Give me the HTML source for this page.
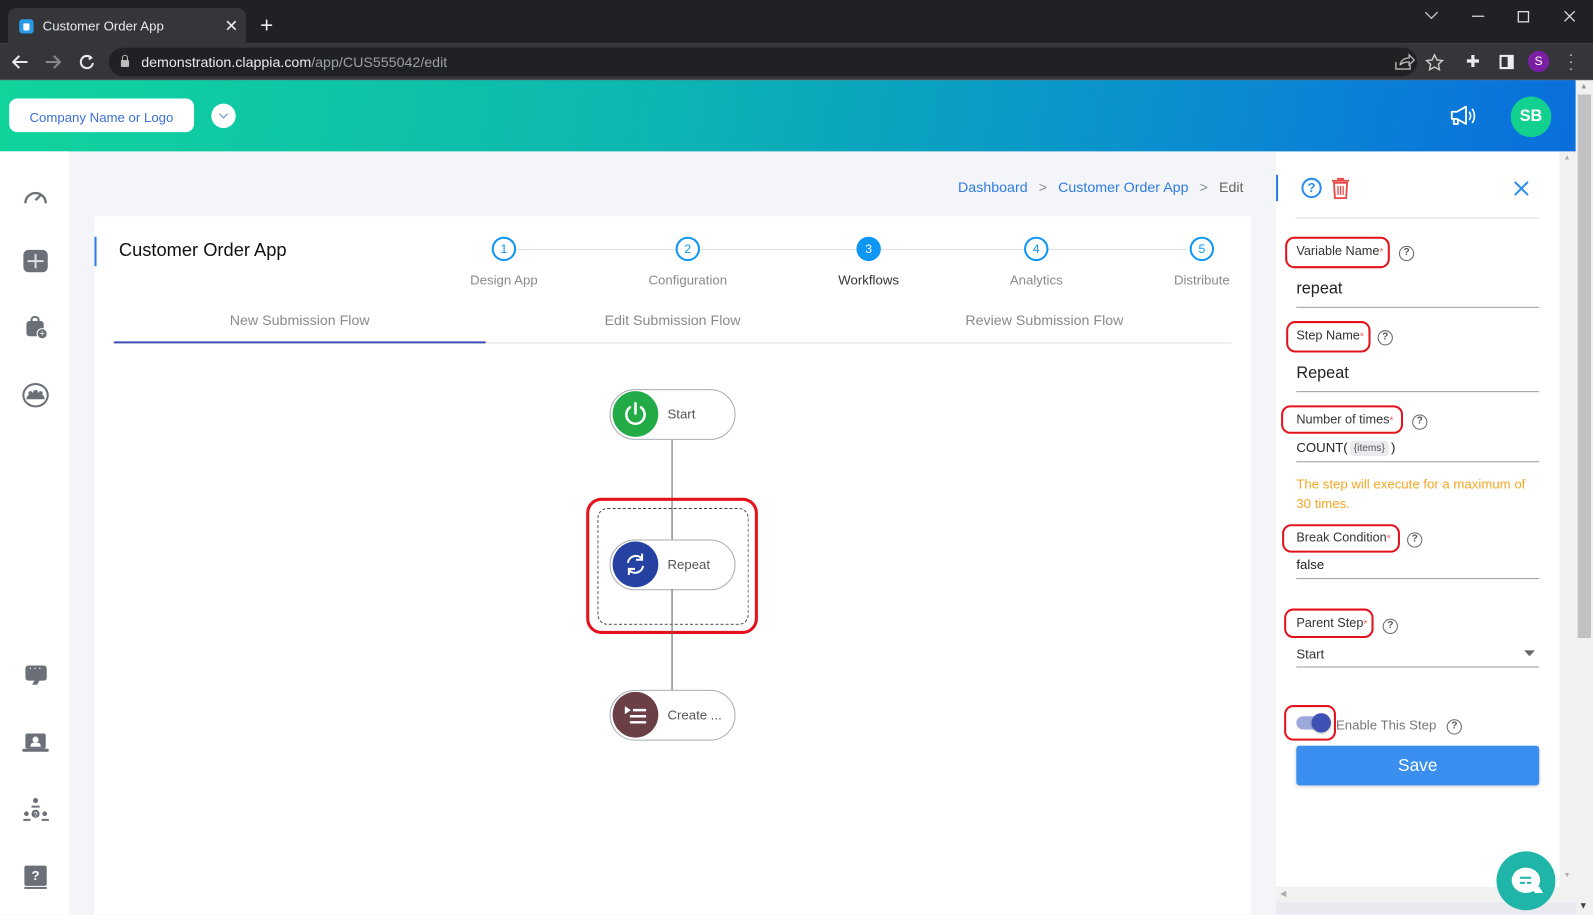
<!DOCTYPE html>
<html><head><meta charset="utf-8">
<style>
*{box-sizing:border-box;margin:0;padding:0}
html,body{width:1593px;height:915px;overflow:hidden;background:#f4f5f9;font-family:"Liberation Sans",Arial,sans-serif}
#w{position:absolute;left:0;top:0;width:1568px;height:900px;transform:scale(1.01594);transform-origin:0 0;background:#f4f5f9}
.a{position:absolute}
.t{position:absolute;white-space:nowrap}
.lbl{font-size:12.5px;color:#333}
.rb{position:absolute;border:2.5px solid #e3121c;border-radius:9px}
.q{position:absolute;width:15px;height:15px;border:1.5px solid #666;border-radius:50%;font-size:10px;color:#555;text-align:center;line-height:12px;font-weight:bold}
.ul{position:absolute;left:1276px;width:239px;height:1px;background:#9e9e9e}
.sc{position:absolute;width:24px;height:24px;border:2px solid #0d96f2;border-radius:50%;color:#0d96f2;font-size:12px;text-align:center;line-height:20px;background:#fff}
.sl{position:absolute;font-size:13px;color:#8a8a8a;white-space:nowrap;transform:translateX(-50%)}
.pill{position:absolute;left:600px;width:124px;height:50px;border:1.5px solid #a9adb2;border-radius:25px;background:#fff}
.pc{position:absolute;left:2px;top:1px;width:45px;height:45px;border-radius:50%}
.pt{position:absolute;left:56px;top:16px;font-size:13px;color:#555}
.si{position:absolute;left:22px}
</style></head><body><div id="w">
<div class="a" style="left:0;top:0;width:1568px;height:43px;background:#202124"></div>
<div class="a" style="left:8px;top:8px;width:234px;height:36px;background:#35363a;border-radius:8px 8px 0 0"></div>
<div class="a" style="left:19px;top:19px;width:14px;height:14px;background:#2b9be8;border-radius:3px"></div>
<div class="a" style="left:23px;top:23px;width:6px;height:7px;background:#fff;border-radius:1px"></div>
<div class="t" style="left:42px;top:18px;font-size:13px;color:#e8eaed">Customer Order App</div>
<div class="t" style="left:221px;top:16px;font-size:16px;color:#e8eaed">✕</div>
<div class="t" style="left:256px;top:12px;font-size:22px;color:#e8eaed">+</div>
<svg class="a" style="left:1400px;top:8px" width="160" height="16"><path d="M3 4l6 6 6-6" stroke="#ccc" fill="none" stroke-width="1.3"/><path d="M49 8h12" stroke="#ddd" stroke-width="1.3"/><rect x="94.5" y="3.5" width="10" height="10" stroke="#ddd" fill="none" stroke-width="1.3"/><path d="M140 3l10 10M150 3l-10 10" stroke="#ddd" stroke-width="1.3"/></svg>
<div class="a" style="left:0;top:43px;width:1568px;height:36px;background:#35363a"></div>
<div class="a" style="left:0;top:78px;width:1568px;height:1px;background:#555"></div>
<svg class="a" style="left:10px;top:51px" width="90" height="20"><path d="M17 10H3m6-6L3 10l6 6" stroke="#e8eaed" stroke-width="2" fill="none"/><path d="M35 10h14m-6-6l6 6-6 6" stroke="#888" stroke-width="2" fill="none"/><path d="M80 6a6 6 0 1 0 1.5 5" stroke="#e8eaed" stroke-width="2" fill="none"/><path d="M77 3l4.5 3-4 2.5z" fill="#e8eaed"/></svg>
<div class="a" style="left:107px;top:47px;width:1288px;height:28px;background:#202124;border-radius:14px"></div>
<div class="a" style="left:119px;top:59px;width:8px;height:7px;background:#bbb;border-radius:1px"></div>
<div class="a" style="left:120px;top:54px;width:6px;height:7px;border:1.5px solid #bbb;border-radius:3px 3px 0 0"></div>
<div class="t" style="left:139px;top:53px;font-size:14px;color:#e8eaed">demonstration.clappia.com<span style="color:#9aa0a6">/app/CUS555042/edit</span></div>
<svg class="a" style="left:1372px;top:52px" width="52" height="18"><path d="M2 9v7h14v-4M6 12c1-5 5-7 9-7V2l5 5-5 5V9c-4 0-7 1-9 3" stroke="#bbb" stroke-width="1.3" fill="none"/><path d="M40 2l2.4 5 5.4.6-4 3.7 1.1 5.4L40 14l-4.9 2.7 1.1-5.4-4-3.7 5.4-.6z" stroke="#ccc" stroke-width="1.4" fill="none"/></svg>
<div class="t" style="left:1443px;top:51px;font-size:16px;color:#e8eaed">✚</div>
<div class="a" style="left:1476px;top:54px;width:14px;height:14px;border:2px solid #eee;border-right-width:6px"></div>
<div class="a" style="left:1504px;top:50px;width:21px;height:21px;border-radius:50%;background:#7b1fa2;color:#fff;font-size:12px;text-align:center;line-height:21px">S</div>
<div class="t" style="left:1544px;top:50px;font-size:14px;color:#ddd;line-height:7px">·<br>·<br>·</div>
<div class="a" style="left:0;top:79px;width:1551px;height:70px;background:linear-gradient(100deg,#10d49c 0%,#0cb7b0 40%,#0a8ed0 75%,#0a6edd 100%)"></div>
<div class="a" style="left:9px;top:97px;width:182px;height:33px;background:#fff;border-radius:8px"></div>
<div class="t" style="left:29px;top:108px;font-size:13px;color:#3b6fd9">Company Name or Logo</div>
<div class="a" style="left:208px;top:102px;width:24px;height:24px;background:#fff;border-radius:50%"></div>
<svg class="a" style="left:215px;top:110px" width="10" height="8"><path d="M1 2l4 4 4-4" stroke="#5b8bd6" fill="none"/></svg>
<svg class="a" style="left:1427px;top:103px" width="28" height="22"><path d="M2 7h5l9-5v17l-9-5H2z M4 14v5h4v-5" stroke="#fff" stroke-width="1.8" fill="none" stroke-linejoin="round"/><path d="M19 7c2 2 2 6 0 8M22 4c3 4 3 10 0 14" stroke="#fff" stroke-width="1.6" fill="none"/></svg>
<div class="a" style="left:1487px;top:95px;width:40px;height:40px;border-radius:50%;background:#12d18e;color:#fff;font-size:16px;font-weight:bold;text-align:center;line-height:40px">SB</div>
<div class="a" style="left:1551px;top:79px;width:17px;height:821px;background:#f1f1f1"></div>
<div class="a" style="left:1553px;top:93px;width:13px;height:535px;background:#c1c1c1"></div>
<div class="t" style="left:1555px;top:80px;font-size:8px;color:#999">▲</div>
<div class="t" style="left:1554px;top:886px;font-size:9px;color:#444">▼</div>
<div class="a" style="left:0;top:149px;width:68px;height:751px;background:#fff"></div>
<svg class="si" style="top:180px" width="26" height="26"><path d="M3 20a10 10 0 1 1 20 0" stroke="#6b6f78" stroke-width="2.3" fill="none"/><path d="M13 17l6-6" stroke="#6b6f78" stroke-width="2.3"/></svg>
<div class="a" style="left:23px;top:246px;width:24px;height:22px;background:#6b6f78;border-radius:5px"></div>
<div class="a" style="left:34px;top:250px;width:2px;height:14px;background:#ddd"></div>
<div class="a" style="left:27px;top:256px;width:16px;height:2px;background:#ddd"></div>
<div class="a" style="left:26px;top:316px;width:17px;height:15px;background:#6b6f78;border-radius:3px"></div>
<div class="a" style="left:30px;top:311px;width:9px;height:7px;border:2px solid #6b6f78;border-radius:4px 4px 0 0"></div>
<div class="a" style="left:36px;top:323px;width:11px;height:11px;background:#6b6f78;border:1.5px solid #fff;border-radius:50%;color:#fff;font-size:9px;line-height:8px;text-align:center">+</div>
<div class="a" style="left:22px;top:377px;width:26px;height:24px;border:2.5px solid #6b6f78;border-radius:50%"></div>
<svg class="a" style="left:26px;top:382px" width="18" height="14"><circle cx="4" cy="5" r="2" fill="#6b6f78"/><circle cx="9" cy="4" r="2.3" fill="#6b6f78"/><circle cx="14" cy="5" r="2" fill="#6b6f78"/><path d="M0 11a4 3 0 0 1 18 0z" fill="#6b6f78"/></svg>
<div class="a" style="left:25px;top:655px;width:21px;height:15px;background:#6b6f78;border-radius:3px"></div>
<div class="a" style="left:33px;top:669px;width:5px;height:5px;background:#6b6f78;transform:skewX(-30deg)"></div>
<div class="t" style="left:28px;top:652px;font-size:11px;color:#fff;letter-spacing:1px">···</div>
<div class="a" style="left:25px;top:722px;width:20px;height:15px;background:#6b6f78;border-radius:2px"></div>
<div class="a" style="left:22px;top:737px;width:26px;height:3px;background:#6b6f78;border-radius:1px"></div>
<div class="a" style="left:32px;top:725px;width:6px;height:6px;background:#fff;border-radius:50%"></div>
<div class="a" style="left:30px;top:731px;width:10px;height:4px;background:#fff;border-radius:3px 3px 0 0"></div>
<svg class="si" style="top:784px" width="28" height="26"><circle cx="13" cy="4" r="2.5" fill="#6b6f78"/><path d="M9 9h8v2H9z" fill="#6b6f78"/><circle cx="4" cy="17" r="2.3" fill="#6b6f78"/><path d="M1 22h7v2H1z" fill="#6b6f78"/><circle cx="22" cy="17" r="2.3" fill="#6b6f78"/><path d="M19 22h7v2h-7z" fill="#6b6f78"/><circle cx="13" cy="17" r="4" fill="#6b6f78"/><text x="13" y="20" font-size="7" fill="#fff" text-anchor="middle" font-family="Liberation Sans">?</text></svg>
<div class="a" style="left:24px;top:852px;width:22px;height:20px;background:#6b6f78;border-radius:2px;color:#fff;font-size:13px;font-weight:bold;text-align:center;line-height:19px">?</div>
<div class="a" style="left:24px;top:873px;width:22px;height:2px;background:#6b6f78"></div>
<div class="t" style="left:943px;top:176px;font-size:14px;color:#2d7be5">Dashboard <span style="color:#888;margin:0 7px">&gt;</span> Customer Order App <span style="color:#888;margin:0 7px">&gt;</span> <span style="color:#666">Edit</span></div>
<div class="a" style="left:93px;top:213px;width:1138px;height:687px;background:#fff"></div>
<div class="a" style="left:93px;top:233px;width:2px;height:29px;background:#2d7be5"></div>
<div class="t" style="left:117px;top:236px;font-size:18px;color:#111">Customer Order App</div>
<div class="a" style="left:508px;top:245px;width:660px;height:1px;background:#dedede"></div>
<div class="sc" style="left:484px;top:233px">1</div>
<div class="sc" style="left:665px;top:233px">2</div>
<div class="sc" style="left:843px;top:233px;background:#0d96f2;color:#fff">3</div>
<div class="sc" style="left:1008px;top:233px">4</div>
<div class="sc" style="left:1171px;top:233px">5</div>
<div class="sl" style="left:496px;top:268px">Design App</div>
<div class="sl" style="left:677px;top:268px">Configuration</div>
<div class="sl" style="left:855px;top:268px;color:#333">Workflows</div>
<div class="sl" style="left:1020px;top:268px">Analytics</div>
<div class="sl" style="left:1183px;top:268px">Distribute</div>
<div class="sl" style="left:295px;top:307px;font-size:14px">New Submission Flow</div>
<div class="sl" style="left:662px;top:307px;font-size:14px">Edit Submission Flow</div>
<div class="sl" style="left:1028px;top:307px;font-size:14px">Review Submission Flow</div>
<div class="a" style="left:112px;top:337px;width:1100px;height:1px;background:#e0e0e0"></div>
<div class="a" style="left:112px;top:336px;width:366px;height:2px;background:#3f51b5"></div>
<div class="a" style="left:661px;top:430px;width:1px;height:250px;background:#666"></div>
<div class="a" style="left:577px;top:490px;width:169px;height:134px;border:3px solid #e3121c;border-radius:15px"></div>
<div class="a" style="left:588px;top:500px;width:149px;height:115px;border:1.5px dashed #444;border-radius:10px"></div>
<div class="a" style="left:661px;top:500px;width:1px;height:32px;background:#666"></div>
<div class="pill" style="top:383px"><div class="pc" style="background:#22ab47"><svg width="45" height="45"><path d="M17 16a9 9 0 1 0 11 0" stroke="#fff" stroke-width="2.5" fill="none" stroke-linecap="round"/><path d="M22.5 12v10" stroke="#fff" stroke-width="2.5" stroke-linecap="round"/></svg></div><div class="pt">Start</div></div>
<div class="pill" style="top:531px"><div class="pc" style="background:#2542a2"><svg width="45" height="45"><path d="M15 21a8 8 0 0 1 14-4M30 24a8 8 0 0 1-14 4" stroke="#fff" stroke-width="2" fill="none"/><path d="M29 12v6h-6M16 33v-6h6" stroke="#fff" stroke-width="2" fill="none"/></svg></div><div class="pt">Repeat</div></div>
<div class="a" style="left:661px;top:580px;width:1px;height:100px;background:#666"></div>
<div class="pill" style="top:679px"><div class="pc" style="background:#6b3f46"><svg width="45" height="45"><path d="M12 14l6 4-6 4z" fill="#fff"/><path d="M20 18h13M17 24h16M17 30h16" stroke="#fff" stroke-width="2.4"/></svg></div><div class="pt">Create ...</div></div>
<div class="a" style="left:1256px;top:150px;width:279px;height:723px;background:#fff"></div>
<div class="a" style="left:1256px;top:172px;width:2px;height:26px;background:#2d7be5"></div>
<div class="a" style="left:1281px;top:175px;width:20px;height:20px;border:2px solid #2d8ef0;border-radius:50%;color:#2d8ef0;font-size:13px;font-weight:bold;text-align:center;line-height:16px">?</div>
<svg class="a" style="left:1310px;top:174px" width="19" height="22"><path d="M1 4h17M7 4V2h5v2" stroke="#e84a4a" stroke-width="1.8" fill="none"/><path d="M3 6h13l-1 15H4z" stroke="#e84a4a" stroke-width="1.8" fill="none"/><path d="M7 9v9M9.5 9v9M12 9v9" stroke="#e84a4a" stroke-width="1.3"/></svg>
<svg class="a" style="left:1490px;top:178px" width="15" height="15"><path d="M1 1l13 13M14 1L1 14" stroke="#2d8ef0" stroke-width="2"/></svg>
<div class="a" style="left:1275px;top:214px;width:240px;height:1px;background:#e2e2e2"></div>
<div class="rb" style="left:1265px;top:233px;width:103px;height:31px"></div>
<div class="t lbl" style="left:1276px;top:240px">Variable Name<span style="color:#f55;font-size:10px">*</span></div>
<div class="q" style="left:1377px;top:242px">?</div>
<div class="t" style="left:1276px;top:276px;font-size:16px;color:#222">repeat</div>
<div class="ul" style="top:302px"></div>
<div class="rb" style="left:1266px;top:316px;width:83px;height:31px"></div>
<div class="t lbl" style="left:1276px;top:323px">Step Name<span style="color:#f55;font-size:10px">*</span></div>
<div class="q" style="left:1356px;top:325px">?</div>
<div class="t" style="left:1276px;top:359px;font-size:16px;color:#222">Repeat</div>
<div class="ul" style="top:385px"></div>
<div class="rb" style="left:1261px;top:399px;width:120px;height:28px"></div>
<div class="t lbl" style="left:1276px;top:406px">Number of times<span style="color:#f55;font-size:10px">*</span></div>
<div class="q" style="left:1390px;top:408px">?</div>
<div class="t" style="left:1276px;top:433px;font-size:13px;color:#222">COUNT(<span style="display:inline-block;background:#e8eaed;border-radius:4px;font-size:10px;color:#555;padding:2px 4px;margin:0 2px;vertical-align:middle">{items}</span>)</div>
<div class="ul" style="top:454px"></div>
<div class="t" style="left:1276px;top:467px;font-size:13px;color:#f5a623;line-height:19px">The step will execute for a maximum of<br>30 times.</div>
<div class="rb" style="left:1262px;top:516px;width:116px;height:28px"></div>
<div class="t lbl" style="left:1276px;top:522px">Break Condition<span style="color:#f55;font-size:10px">*</span></div>
<div class="q" style="left:1385px;top:524px">?</div>
<div class="t" style="left:1276px;top:548px;font-size:13px;color:#222">false</div>
<div class="ul" style="top:569px"></div>
<div class="rb" style="left:1264px;top:599px;width:88px;height:29px"></div>
<div class="t lbl" style="left:1276px;top:606px">Parent Step<span style="color:#f55;font-size:10px">*</span></div>
<div class="q" style="left:1361px;top:609px">?</div>
<div class="t" style="left:1276px;top:636px;font-size:13px;color:#333">Start</div>
<svg class="a" style="left:1500px;top:640px" width="11" height="6"><path d="M0 0h11L5.5 6z" fill="#666"/></svg>
<div class="ul" style="top:656px"></div>
<div class="rb" style="left:1264px;top:694px;width:51px;height:35px"></div>
<div class="a" style="left:1276px;top:705px;width:34px;height:13px;background:#9fa8da;border-radius:7px"></div>
<div class="a" style="left:1291px;top:702px;width:19px;height:19px;background:#3f51b5;border-radius:50%;box-shadow:0 1px 2px rgba(0,0,0,.3)"></div>
<div class="t" style="left:1315px;top:706px;font-size:13px;color:#777">Enable This Step</div>
<div class="q" style="left:1424px;top:708px">?</div>
<div class="a" style="left:1276px;top:734px;width:239px;height:39px;background:#3a8ef0;border-radius:3px;box-shadow:0 1px 3px rgba(0,0,0,.2);color:#fff;font-size:17px;text-align:center;line-height:39px">Save</div>
<div class="a" style="left:1535px;top:150px;width:16px;height:723px;background:#f1f1f1"></div>
<div class="t" style="left:1539px;top:152px;font-size:7px;color:#aaa">▲</div>
<div class="t" style="left:1539px;top:858px;font-size:7px;color:#aaa">▼</div>
<div class="a" style="left:1256px;top:873px;width:295px;height:15px;background:#f1f1f1"></div>
<div class="t" style="left:1260px;top:875px;font-size:8px;color:#aaa">◀</div>
<div class="a" style="left:1256px;top:888px;width:295px;height:12px;background:#e8eaf0"></div>
<div class="a" style="left:1473px;top:838px;width:58px;height:58px;border-radius:50%;background:#1fb6a9"></div>
<div class="a" style="left:1488px;top:854px;width:28px;height:25px;border-radius:50%;background:#fff"></div>
<div class="a" style="left:1509px;top:873px;width:8px;height:6px;background:#fff;transform:skewX(30deg)"></div>
<div class="a" style="left:1496px;top:863px;width:11px;height:2px;background:#1fb6a9"></div>
<div class="a" style="left:1496px;top:868px;width:5px;height:2px;background:#1fb6a9"></div>
<div class="a" style="left:1503px;top:868px;width:4px;height:2px;background:#1fb6a9"></div>
</div></body></html>
